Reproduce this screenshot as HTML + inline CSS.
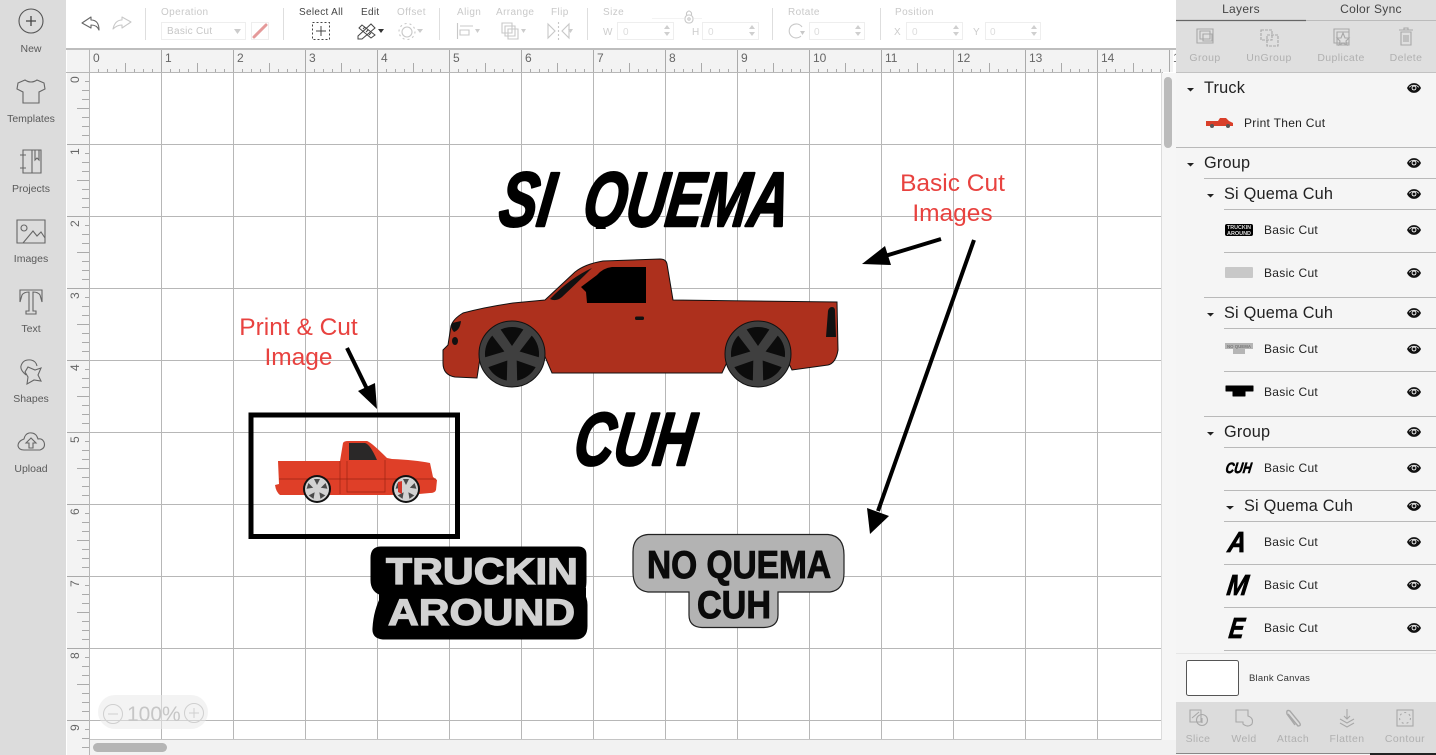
<!DOCTYPE html>
<html><head><meta charset="utf-8"><title>Design Space</title>
<style>
html,body{margin:0;padding:0;background:#fff;width:1436px;height:755px;overflow:hidden}
svg{display:block;font-family:"Liberation Sans",sans-serif}
.sl{font-size:10.5px;fill:#5a5a5a;text-anchor:middle}
.tl{font-size:10px;fill:#c9c9c9;letter-spacing:.4px}
.tk{font-size:10px;fill:#444;letter-spacing:.3px}
.rt{font-size:12px;fill:#666}
.h{font-size:16.3px;fill:#222;letter-spacing:.2px}
.b{font-size:12px;fill:#222;letter-spacing:.3px}
.pl{font-size:10.5px;fill:#b0b0b0;text-anchor:middle;letter-spacing:.4px}
.ic{fill:none;stroke:#666;stroke-width:1.1}
.ig{fill:none;stroke:#c8c8c8;stroke-width:1.1}
.ip{fill:none;stroke:#a8a8a8;stroke-width:1.1}
.br{font-family:"Liberation Sans",sans-serif;font-weight:bold;font-style:italic;fill:#000;stroke:#000}
</style></head><body>
<svg width="1436" height="755" viewBox="0 0 1436 755" xmlns="http://www.w3.org/2000/svg">
<defs>
<pattern id="grid" patternUnits="userSpaceOnUse" x="89" y="72" width="72" height="72"><path d="M.5 0V72M0 .5H72" stroke="#b7b7b7" fill="none"/></pattern>
<pattern id="rx" patternUnits="userSpaceOnUse" x="89" y="49" width="72" height="23"><path d="M.5 0V23M9.5 20V23M18.5 20V23M27.5 20V23M36.5 14V23M45.5 20V23M54.5 20V23M63.5 20V23" stroke="#aaa" fill="none"/></pattern>
<pattern id="ry" patternUnits="userSpaceOnUse" x="67" y="72" width="23" height="72"><path d="M0 .5H23M18 9.5H23M15 18.5H23M15 27.5H23M10 36.5H23M15 45.5H23M15 54.5H23M15 63.5H23" stroke="#aaa" fill="none"/></pattern>
<clipPath id="c1"><rect x="480" y="150" width="330" height="79"/></clipPath>
<symbol id="eye" viewBox="0 0 14 10" overflow="visible"><path d="M0 5C3-1.5 11-1.500 14 5C11 11.500 3 11.500 0 5Z" fill="#111"/><path d="M2.200 4.400C4.500 1.500 9.500 1.500 11.800 4.400" fill="none" stroke="#fff" stroke-width=".7"/><circle cx="7" cy="5" r="2.400" fill="#fff"/><circle cx="7" cy="5" r="1.500" fill="#111"/></symbol>
<path id="wd" d="M0-8L-11.400-24.500A27 27 0 0 1 11.400-24.500Z" fill="#0c0c0c"/>
<g id="rim"><use href="#wd"/><use href="#wd" transform="rotate(72)"/><use href="#wd" transform="rotate(144)"/><use href="#wd" transform="rotate(216)"/><use href="#wd" transform="rotate(288)"/></g>
<path id="sw" d="M0-4L-3-10H3Z" fill="#4a4a4a"/>
<g id="mw"><circle r="14" fill="#111"/><circle r="12" fill="#d2d2d2"/><use href="#sw"/><use href="#sw" transform="rotate(72)"/><use href="#sw" transform="rotate(144)"/><use href="#sw" transform="rotate(216)"/><use href="#sw" transform="rotate(288)"/></g>
</defs>

<rect width="1436" height="755" fill="#fff"/>
<!-- canvas -->
<rect x="89" y="72" width="1074" height="668" fill="url(#grid)"/>
<!-- rulers -->
<rect x="67" y="49" width="1096" height="23" fill="#f3f3f3"/>
<rect x="89" y="49" width="1084" height="23" fill="#f3f3f3"/>
<rect x="89" y="49" width="1084" height="23" fill="url(#rx)"/>
<rect x="67" y="72" width="23" height="683" fill="#f3f3f3"/>
<rect x="67" y="72" width="23" height="683" fill="url(#ry)"/>
<rect x="66" y="48" width="1110" height="2" fill="#bdbdbd"/>
<path d="M66 72.500H1163M89.500 49V755" stroke="#b7b7b7"/>
<g class="rt">
<text x="93" y="62">0</text><text x="165" y="62">1</text><text x="237" y="62">2</text><text x="309" y="62">3</text><text x="381" y="62">4</text><text x="453" y="62">5</text><text x="525" y="62">6</text><text x="597" y="62">7</text><text x="669" y="62">8</text><text x="741" y="62">9</text><text x="813" y="62">10</text><text x="885" y="62">11</text><text x="957" y="62">12</text><text x="1029" y="62">13</text><text x="1101" y="62">14</text><text x="1173" y="62">1</text>
<text transform="translate(79 83) rotate(-90)">0</text><text transform="translate(79 155) rotate(-90)">1</text><text transform="translate(79 227) rotate(-90)">2</text><text transform="translate(79 299) rotate(-90)">3</text><text transform="translate(79 371) rotate(-90)">4</text><text transform="translate(79 443) rotate(-90)">5</text><text transform="translate(79 515) rotate(-90)">6</text><text transform="translate(79 587) rotate(-90)">7</text><text transform="translate(79 659) rotate(-90)">8</text><text transform="translate(79 731) rotate(-90)">9</text>
</g>

<!-- big text -->
<g class="br" stroke-width="2.400" stroke-linejoin="round">
<g clip-path="url(#c1)">
<text transform="translate(497 226) skewX(-8)" font-size="77" textLength="54" lengthAdjust="spacingAndGlyphs">SI</text>
<text transform="translate(581 226) skewX(-8)" font-size="77" textLength="205" lengthAdjust="spacingAndGlyphs">QUEMA</text>
</g>
<text transform="translate(572 465) skewX(-8)" font-size="75" textLength="119" lengthAdjust="spacingAndGlyphs">CUH</text>
</g>

<!-- big truck -->
<path d="M443 350L448 345L451 326Q453 319 463 313Q485 307 513 303L545 300L575 272Q585 264 603 261L660 259Q666 259 667 264L673 300L837 302L838 350Q836 363 828 365L792 370L780 345H735L722 373H552L540 345H482L477 378L455 377Q443 375 443 363Z" fill="#ad301d" stroke="#111" stroke-width="1"/>
<circle cx="512" cy="354" r="33" fill="#3f3f3f" stroke="#111"/><use href="#rim" transform="translate(512 354)"/>
<circle cx="758" cy="354" r="33" fill="#3f3f3f" stroke="#111"/><use href="#rim" transform="translate(758 354)"/>
<path d="M587 303H646V267H612Q603 268 597 275L581 287L586 292Z" fill="#000"/>
<path d="M550 299Q570 278 592 268Q578 282 562 297Q556 302 550 299Z" fill="#111"/>
<rect x="635" y="316.500" width="9" height="3.500" rx="1.500" fill="#111"/>
<path d="M826 337L828 311Q829 307 832 307Q835 307 835 311L836 337Z" fill="#111"/>
<path d="M452 323L461 321Q460 330 454 332Q450 328 452 323Z" fill="#111"/><ellipse cx="455" cy="341" rx="3" ry="4" fill="#111"/>

<!-- print box -->
<rect x="251" y="415" width="206.500" height="121.500" fill="none" stroke="#000" stroke-width="5"/>
<path d="M278 461L340 461L343 443Q344 441 348 441L367 441Q371 442 387 458L392 459Q415 460 430 463L433 477L437 480L436 490Q435 493 430 493L419 494L390 495L335 495L300 495L280 495Q276 492 275 485L279 484Z" fill="#df3f28"/>
<path d="M349 443H365Q370 444 377 460H349Z" fill="#2a2828"/>
<path d="M279 479H436M340 461V494M347 461V492H385V460" fill="none" stroke="#9b2413" stroke-width=".7"/>
<use href="#mw" transform="translate(317 489)"/><use href="#mw" transform="translate(406 489)"/>
<path d="M398 482L402 481L402 494L398 492Z" fill="#d2352a"/>

<!-- annotations -->
<g fill="#e8423f" font-size="24.500" text-anchor="middle"><text x="298.500" y="335">Print &amp; Cut</text><text x="298.500" y="365">Image</text><text x="952.500" y="191">Basic Cut</text><text x="952.500" y="221">Images</text></g>
<path d="M347 348L368 391" stroke="#000" stroke-width="4"/><path d="M377 409L358 391L375 383Z" fill="#000"/>
<path d="M941 239L885 256" stroke="#000" stroke-width="4"/><path d="M862 264L885 246L891 265Z" fill="#000"/>
<path d="M974 240L878 511" stroke="#000" stroke-width="4"/><path d="M870 534L867 508L889 516Z" fill="#000"/>

<!-- truckin around -->
<path d="M381 547H578Q586 547 586 555V580Q586 590 583 592Q587 598 587 605V626Q587 639 575 639H385Q372 639 373 628Q374 610 382 595Q371 592 371 580V558Q371 547 381 547Z" fill="#000" stroke="#000" stroke-width="1"/>
<path d="M379 588H586V600H379Z" fill="#000"/>
<g font-weight="bold" fill="#d2d2d2" stroke="#d2d2d2" stroke-width="1.200" font-size="37"><text x="386" y="584" textLength="192" lengthAdjust="spacingAndGlyphs">TRUCKIN</text><text x="388" y="625" textLength="187" lengthAdjust="spacingAndGlyphs">AROUND</text></g>

<!-- no quema -->
<path d="M648 534.500H828Q844 536 844 555V573Q844 590 830 592H778V615Q778 627 764 627.500H702Q689 627 689 615V592H648Q633 590 633 572V552Q633 536 648 534.500Z" fill="#b3b3b3" stroke="#222" stroke-width="1.200"/>
<g font-weight="bold" fill="#0b0b0b" stroke="#0b0b0b" stroke-width="1" font-size="39"><text x="647" y="578" textLength="184" lengthAdjust="spacingAndGlyphs">NO QUEMA</text><text x="697" y="618" textLength="74" lengthAdjust="spacingAndGlyphs">CUH</text></g>

<!-- zoom pill -->
<rect x="98" y="695" width="110" height="34" rx="17" fill="#e9e9e9" opacity=".55"/>
<g fill="none" stroke="#cfcfcf"><circle cx="113" cy="714" r="9.500"/><circle cx="194" cy="713" r="9.500"/><path d="M108 714H118M189 713H199M194 708V718"/></g>
<text x="127" y="721" font-size="21" fill="#c6c6c6">100%</text>

<!-- bottom scrollbar -->
<rect x="90" y="739" width="1086" height="16" fill="#f2f2f2"/>
<path d="M90 739.500H1163" stroke="#c4c4c4"/>
<rect x="93" y="743" width="74" height="9" rx="4.500" fill="#b5b5b5"/>
<!-- right scrollbar -->
<rect x="1162" y="73" width="14" height="667" fill="#f6f6f6"/>
<path d="M1161.500 72V740" stroke="#dcdcdc"/>
<rect x="1164" y="77" width="8" height="71" rx="4" fill="#bbb"/>

<!-- top toolbar -->
<rect x="66" y="0" width="1110" height="48" fill="#fff"/>
<path d="M145.500 8V40M283.500 8V40M439.500 8V40M587.500 8V40M772.500 8V40M880.500 8V40" stroke="#dedede"/>
<path d="M91 17L82 23L91 28V25Q97 25 99 30Q99 20 91 20Z" class="ic" stroke-linejoin="round"/>
<path d="M122 17L131 22L122 28V25Q117 25 113 29Q115 20 122 20Z" class="ig" stroke-linejoin="round"/>
<text x="161" y="15" class="tl">Operation</text>
<rect x="161.500" y="22.500" width="84" height="17" fill="#fff" stroke="#eee"/>
<text x="167" y="34" font-size="10" fill="#c6c6c6" letter-spacing=".3">Basic Cut</text><path d="M234 29H241L237.500 34Z" fill="#ccc"/>
<rect x="251.500" y="22.500" width="17" height="17" fill="#fff" stroke="#eee"/><path d="M254 37L266 25" stroke="#e59a9a" stroke-width="3" stroke-linecap="round"/>
<text x="299" y="15" class="tk">Select All</text>
<rect x="312.500" y="22.500" width="17" height="17" fill="none" stroke="#444" stroke-dasharray="2 2"/><path d="M316 31H326M321 26V36" stroke="#444"/>
<text x="361" y="15" class="tk">Edit</text>
<g fill="none" stroke="#444" stroke-width="1"><path d="M358 36L371 24L375 28L362 39L358 39Z"/><path d="M362 25L359 28L371 38L375 35Z"/><path d="M363 29L365 27M366 32L368 30M369 35L371 33"/></g><path d="M378 29H384L381 33Z" fill="#333"/>
<text x="397" y="15" class="tl">Offset</text>
<g class="ig"><circle cx="407" cy="32" r="5"/><circle cx="407" cy="31.500" r="8" stroke-dasharray="2 3"/></g><path d="M417 29H423L420 33Z" fill="#ccc"/>
<text x="457" y="15" class="tl">Align</text>
<path class="ig" d="M457.500 23V39M460 26H473M460 30H469V35H460Z"/><path d="M475 29H480L477.500 33Z" fill="#ccc"/>
<text x="496" y="15" class="tl">Arrange</text>
<path class="ig" d="M502 23H512V33H502ZM505 26H515V36H505ZM508 29H518V39H508Z"/><path d="M521 29H526L523.500 33Z" fill="#ccc"/>
<text x="551" y="15" class="tl">Flip</text>
<path class="ig" d="M548 24L555 31L548 38ZM569 24L562 31L569 38Z"/><path class="ig" d="M558.500 22V40" stroke-dasharray="2 2"/><path d="M568 29H573L570.500 33Z" fill="#ccc"/>
<text x="603" y="15" class="tl">Size</text>
<text x="603" y="35" font-size="10" fill="#ccc">W</text>
<text x="692" y="35" font-size="10" fill="#ccc">H</text>
<path d="M652 18.500H684M694 18.500H702" stroke="#f3f3f3"/>
<g class="ig"><rect x="685" y="15" width="8" height="8" rx="3.500"/><path d="M686.500 15V13Q689 9 691.500 13V15"/><circle cx="689" cy="19" r="1.200"/></g>
<g fill="#fff" stroke="#eee"><rect x="617.500" y="22.500" width="56" height="17"/><rect x="702.500" y="22.500" width="56" height="17"/><rect x="809.500" y="22.500" width="55" height="17"/><rect x="906.500" y="22.500" width="56" height="17"/><rect x="985.500" y="22.500" width="55" height="17"/></g>
<g font-size="10" fill="#ddd"><text x="623" y="35">0</text><text x="708" y="35">0</text><text x="814" y="35">0</text><text x="912" y="35">0</text><text x="990" y="35">0</text></g>
<g fill="#cfcfcf"><path d="M664 29L667 25L670 29ZM664 32H670L667 36ZM749 29L752 25L755 29ZM749 32H755L752 36ZM855 29L858 25L861 29ZM855 32H861L858 36ZM953 29L956 25L959 29ZM953 32H959L956 36ZM1031 29L1034 25L1037 29ZM1031 32H1037L1034 36Z"/></g>
<text x="788" y="15" class="tl">Rotate</text>
<path class="ig" d="M801 36A7 7 0 1 1 802 27" stroke-width="1.500"/><path d="M800 31H805L802.500 35Z" fill="#c8c8c8"/>
<text x="895" y="15" class="tl">Position</text>
<text x="894" y="35" font-size="10" fill="#ccc">X</text><text x="973" y="35" font-size="10" fill="#ccc">Y</text>

<!-- left sidebar -->
<rect width="66" height="755" fill="#dcdcdc"/>
<circle cx="31" cy="21" r="12" fill="none" stroke="#555" stroke-width="1.100"/><path d="M26 21H36M31 16V26" stroke="#444" stroke-width="1.300"/>
<text x="31" y="52" class="sl">New</text>
<path class="ic" d="M25 80L18 83L17 89L23 92V103H39V92L45 89L44 83L37 80Q31 84 25 80Z"/>
<text x="31" y="122" class="sl">Templates</text>
<path class="ic" d="M23 150H41V173H23ZM32 150V173M20 155H26M20 168H26M35 150V160L37 158L39 160V150"/>
<text x="31" y="192" class="sl">Projects</text>
<path class="ic" d="M17 220H45V243H17ZM23 243L33 231L37 236L41 232L45 238"/><circle cx="24" cy="228" r="3" class="ic"/>
<text x="31" y="262" class="sl">Images</text>
<path class="ic" d="M20 290H42V302L40 295Q38 292 33 292V311H36V314H26V311H29V292Q24 292 22 295L20 302Z"/>
<text x="31" y="332" class="sl">Text</text>
<path class="ic" d="M26 375Q20 370 21 366Q23 359 31 360Q36 361 37 366M28 367L35 370L41 368L38 375L41 381L34 380L27 384L28 377L25 372Z"/>
<text x="31" y="402" class="sl">Shapes</text>
<path class="ic" d="M24 450H40Q46 448 44 442Q42 438 38 439Q36 432 29 433Q25 434 24 439Q18 441 18 446Q19 450 24 450ZM29 448V443H26L31 438L36 443H33V448Z"/>
<text x="31" y="472" class="sl">Upload</text>

<!-- right panel -->
<rect x="1176" y="0" width="260" height="755" fill="#f5f5f5"/>
<rect x="1176" y="0" width="260" height="72" fill="#dfdfdf"/>
<path d="M1176 72.500H1436" stroke="#c2c2c2"/>
<path d="M1176 20.500H1306" stroke="#666" stroke-width="1.200"/><path d="M1306 20.500H1436" stroke="#bbb"/>
<text x="1241" y="13" font-size="12" fill="#444" text-anchor="middle" letter-spacing=".3">Layers</text>
<text x="1371" y="13" font-size="12" fill="#444" text-anchor="middle" letter-spacing=".3">Color Sync</text>
<g class="ip"><path d="M1197 29H1213V43H1197ZM1200 31H1210V39H1200ZM1203 34H1212V41H1203Z"/>
<path d="M1261 30H1272V40H1261ZM1267 35H1278V46H1267Z" stroke-dasharray="3 1"/>
<path d="M1334 29H1349V43H1334ZM1337 32H1349V45H1337ZM1343 33L1345 38L1349 38L1346 41L1347 45L1343 43L1339 45L1340 41L1337 38L1341 38Z"/>
<path d="M1399 30H1413M1401 32H1411V45H1401ZM1404 35V42M1406 35V42M1408 35V42M1404 30V28H1408V30"/></g>
<text x="1205" y="61" class="pl">Group</text><text x="1269" y="61" class="pl">UnGroup</text><text x="1341" y="61" class="pl">Duplicate</text><text x="1406" y="61" class="pl">Delete</text>

<!-- layer lines -->
<path d="M1176 147.500H1436M1204 178.500H1436M1224 209.500H1436M1224 252.500H1436M1204 297.500H1436M1224 328.500H1436M1224 371.500H1436M1204 416.500H1436M1224 447.500H1436M1224 490.500H1436M1224 521.500H1436M1224 564.500H1436M1224 607.500H1436M1224 650.500H1436" stroke="#b9b9b9"/>
<g fill="#222"><path d="M1187 88H1194L1190.500 91.500ZM1187 163H1194L1190.500 166.500ZM1207 194H1214L1210.500 197.500ZM1207 313H1214L1210.500 316.500ZM1207 432H1214L1210.500 435.500ZM1226 506H1234L1230 509.500Z"/></g>
<g class="h"><text x="1204" y="93">Truck</text><text x="1204" y="168">Group</text><text x="1224" y="199">Si Quema Cuh</text><text x="1224" y="318">Si Quema Cuh</text><text x="1224" y="437">Group</text><text x="1244" y="511">Si Quema Cuh</text></g>
<g class="b"><text x="1244" y="127">Print Then Cut</text><text x="1264" y="234">Basic Cut</text><text x="1264" y="277">Basic Cut</text><text x="1264" y="353">Basic Cut</text><text x="1264" y="396">Basic Cut</text><text x="1264" y="472">Basic Cut</text><text x="1264" y="546">Basic Cut</text><text x="1264" y="589">Basic Cut</text><text x="1264" y="632">Basic Cut</text></g>
<use href="#eye" x="1407" y="83" width="14" height="10"/><use href="#eye" x="1407" y="158" width="14" height="10"/><use href="#eye" x="1407" y="189" width="14" height="10"/><use href="#eye" x="1407" y="225" width="14" height="10"/><use href="#eye" x="1407" y="268" width="14" height="10"/><use href="#eye" x="1407" y="308" width="14" height="10"/><use href="#eye" x="1407" y="344" width="14" height="10"/><use href="#eye" x="1407" y="387" width="14" height="10"/><use href="#eye" x="1407" y="427" width="14" height="10"/><use href="#eye" x="1407" y="463" width="14" height="10"/><use href="#eye" x="1407" y="501" width="14" height="10"/><use href="#eye" x="1407" y="537" width="14" height="10"/><use href="#eye" x="1407" y="580" width="14" height="10"/><use href="#eye" x="1407" y="623" width="14" height="10"/>

<!-- thumbs -->
<path d="M1206 121H1218L1220 118H1226L1229 121L1233 123V126H1206Z" fill="#d93f2a"/><circle cx="1212" cy="126" r="2" fill="#555"/><circle cx="1228" cy="126" r="2" fill="#555"/>
<rect x="1225" y="224" width="28" height="12" rx="2" fill="#000"/><g font-size="5" font-weight="bold" fill="#ddd"><text x="1227" y="229" textLength="24" lengthAdjust="spacingAndGlyphs">TRUCKIN</text><text x="1227" y="235" textLength="24" lengthAdjust="spacingAndGlyphs">AROUND</text></g>
<rect x="1225" y="267" width="28" height="11" rx="1" fill="#c8c8c8"/>
<path d="M1225 343H1253V349H1245V354H1233V349H1225Z" fill="#b5b5b5"/><g font-size="4.500" font-weight="bold" fill="#777"><text x="1227" y="348" textLength="24" lengthAdjust="spacingAndGlyphs">NO QUEMA</text></g>
<path d="M1226 386H1253V391H1245V396H1233V391H1226Z" fill="#000" stroke="#000" stroke-linejoin="round"/>
<g class="br" stroke-width=".6"><text transform="translate(1225 473) skewX(-8)" font-size="15" textLength="26" lengthAdjust="spacingAndGlyphs">CUH</text>
<text transform="translate(1227 552) skewX(-8)" font-size="29" textLength="18" lengthAdjust="spacingAndGlyphs" stroke-width=".8">A</text>
<text transform="translate(1226 595) skewX(-8)" font-size="29" textLength="21" lengthAdjust="spacingAndGlyphs" stroke-width=".8">M</text>
<text transform="translate(1228 638) skewX(-8)" font-size="29" textLength="15" lengthAdjust="spacingAndGlyphs" stroke-width=".8">E</text></g>

<!-- canvas footer -->
<path d="M1176 653.500H1436" stroke="#e6e6e6"/>
<rect x="1186.500" y="660.500" width="52" height="35" rx="2" fill="#fff" stroke="#555"/>
<text x="1249" y="681" font-size="9.500" fill="#333" letter-spacing=".2">Blank Canvas</text>
<!-- bottom tools -->
<rect x="1176" y="702" width="260" height="51" fill="#dcdcdc"/>
<path d="M1176 753.500H1436" stroke="#888"/>
<rect x="1370" y="753" width="66" height="2" fill="#222"/>
<g class="ip"><path d="M1190 710H1201V722H1190Z"/><circle cx="1202" cy="720" r="5.500"/><path d="M1192 718L1199 712M1202 718V723"/>
<path d="M1236 710H1248V716Q1254 718 1252 724Q1248 728 1243 724V722H1236Z"/>
<path d="M1288 714L1298 726Q1302 726 1299 722L1290 711Q1286 709 1287 714L1295 725" stroke-width="1.400"/>
<path d="M1347 709V719M1344 716L1347 719L1350 716M1340 719L1347 723L1354 719M1340 723L1347 727L1354 723"/>
<rect x="1397" y="710" width="16" height="16"/><circle cx="1405" cy="718" r="5.500" stroke-dasharray="2 3"/></g>
<text x="1198" y="742" class="pl">Slice</text><text x="1244" y="742" class="pl">Weld</text><text x="1293" y="742" class="pl">Attach</text><text x="1347" y="742" class="pl">Flatten</text><text x="1405" y="742" class="pl">Contour</text>
</svg>
</body></html>
